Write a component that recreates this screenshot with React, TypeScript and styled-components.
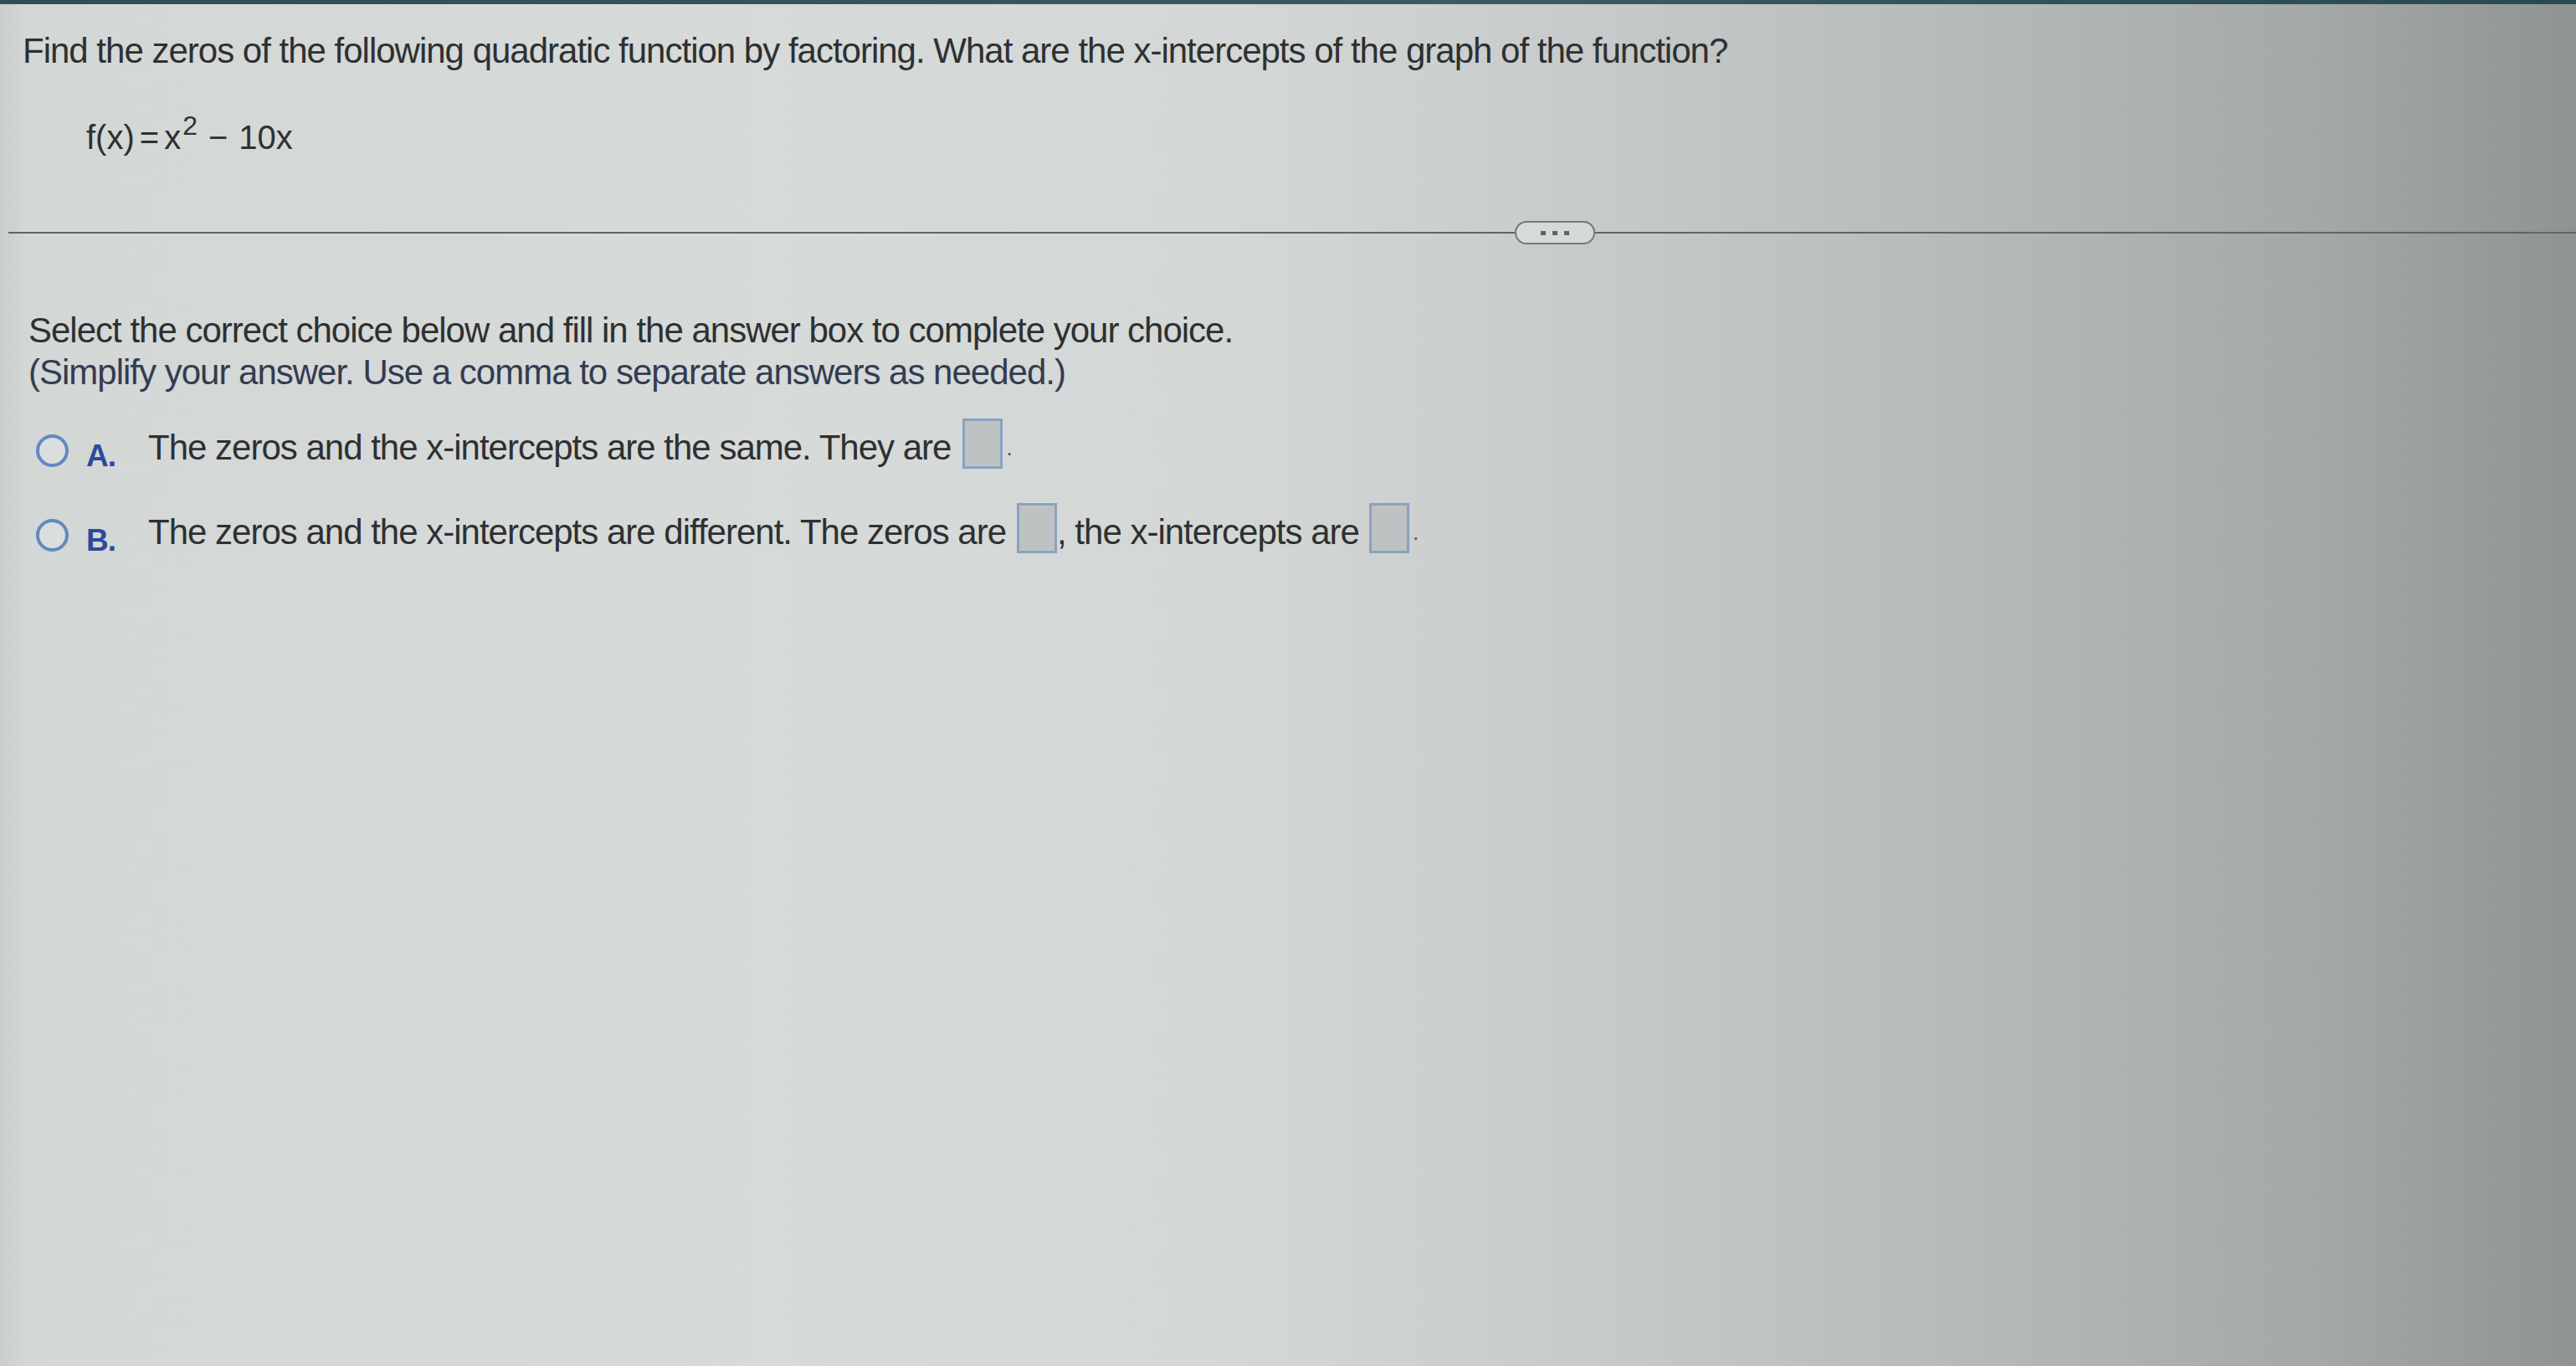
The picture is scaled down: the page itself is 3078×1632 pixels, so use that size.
import React from 'react'
import styled, { createGlobalStyle } from 'styled-components'

const GlobalStyle = createGlobalStyle`
  html, body {
    margin: 0;
    padding: 0;
  }
  body {
    min-height: 100vh;
    font-family: "Liberation Sans", Arial, sans-serif;
    color: #2e3031;
    background: linear-gradient(
      90deg,
      #c9cdcc 0%,
      #d3d7d6 1%,
      #d6dad9 30%,
      #d3d7d6 48%,
      #c6caca 62%,
      #b5baba 76%,
      #a3a8a8 90%,
      #8e9494 100%
    );
  }
`

const Page = styled.div`
  min-height: 1632px;
  display: flex;
  flex-direction: column;
`

const TopStrip = styled.div`
  height: 5px;
  background: linear-gradient(90deg, #2f4d58, #3b5a64 60%, #2c4852);
`

const QuestionArea = styled.div`
  padding: 31px 0 0 27px;
`

const Title = styled.div`
  font-size: 42px;
  line-height: 50px;
  letter-spacing: -1px;
  white-space: nowrap;
`

const Formula = styled.div`
  margin: 53px 0 0 76px;
  font-size: 40px;
  line-height: 50px;
  white-space: nowrap;
`

const Op = styled.span<{ $wide?: boolean }>`
  display: inline-block;
  margin: 0 ${(p) => (p.$wide ? '13px' : '6px')};
`

const Sup = styled.sup`
  font-size: 32px;
  line-height: 0;
  vertical-align: 17px;
  margin-left: 2px;
`

const DividerRow = styled.div`
  display: flex;
  align-items: center;
  margin-top: 75px;
  padding-left: 10px;
  height: 28px;
`

const Line = styled.div<{ $width?: number }>`
  height: 2px;
  background: #606465;
  ${(p) => (p.$width ? `width: ${p.$width}px;` : 'flex: 1;')}
`

const MorePill = styled.button`
  width: 96px;
  height: 28px;
  box-sizing: border-box;
  border: 2px solid #74797a;
  border-radius: 14px;
  background: rgba(225, 229, 228, 0.55);
  display: flex;
  align-items: center;
  justify-content: center;
  gap: 8px;
  padding: 0;
`

const Dot = styled.span`
  width: 6px;
  height: 5px;
  background: #5f6365;
`

const ChoicesArea = styled.div`
  padding: 78px 0 0 34px;
`

const Instruction = styled.div<{ $navy?: boolean }>`
  font-size: 42px;
  line-height: 50px;
  letter-spacing: -1px;
  white-space: nowrap;
  color: ${(p) => (p.$navy ? '#333c50' : '#2e3031')};
`

const Options = styled.div`
  display: flex;
  flex-direction: column;
  gap: 41px;
  margin-top: 30px;
  padding-left: 9px;
`

const OptionRow = styled.div`
  display: flex;
  align-items: center;
  height: 60px;
`

const Marker = styled.div`
  width: 134px;
  flex: none;
  display: flex;
  align-items: center;
  margin-top: 16px;
`

const Radio = styled.span`
  width: 39px;
  height: 39px;
  box-sizing: border-box;
  border-radius: 50%;
  border: 4px solid #6488c0;
  background: rgba(236, 240, 244, 0.3);
`

const Letter = styled.span`
  margin-left: 21px;
  font-size: 37px;
  font-weight: bold;
  letter-spacing: -1px;
  color: #2b4b9a;
  line-height: 40px;
  margin-top: 14px;
`

const Content = styled.div`
  display: flex;
  align-items: flex-end;
  height: 60px;
  font-size: 42px;
  line-height: 50px;
  letter-spacing: -1px;
  white-space: nowrap;
`

const Text = styled.span``

const AnswerBox = styled.span<{ $gap?: number }>`
  display: inline-block;
  width: 48px;
  height: 60px;
  box-sizing: border-box;
  margin-left: ${(p) => p.$gap ?? 13}px;
  border: 3px solid #88a2c0;
  background: #bec2c2;
`

const Punct = styled.span`
  margin-left: 4px;
  font-size: 26px;
  color: #4a4d4f;
`

const App: React.FC = () => {
  return (
    <Page>
      <GlobalStyle />
      <TopStrip />
      <QuestionArea>
        <Title>
          Find the zeros of the following quadratic function by factoring. What are the x-intercepts of the graph of the
          function?
        </Title>
        <Formula>
          f(x)<Op>=</Op>x<Sup>2</Sup>
          <Op $wide>−</Op>10x
        </Formula>
      </QuestionArea>

      <DividerRow>
        <Line $width={1800} />
        <MorePill aria-label="more">
          <Dot />
          <Dot />
          <Dot />
        </MorePill>
        <Line />
      </DividerRow>

      <ChoicesArea>
        <Instruction>Select the correct choice below and fill in the answer box to complete your choice.</Instruction>
        <Instruction $navy>(Simplify your answer. Use a comma to separate answers as needed.)</Instruction>

        <Options>
          <OptionRow>
            <Marker>
              <Radio />
              <Letter>A.</Letter>
            </Marker>
            <Content>
              <Text>The zeros and the x-intercepts are the same. They are</Text>
              <AnswerBox $gap={14} />
              <Punct>.</Punct>
            </Content>
          </OptionRow>
          <OptionRow>
            <Marker>
              <Radio />
              <Letter>B.</Letter>
            </Marker>
            <Content>
              <Text>The zeros and the x-intercepts are different. The zeros are</Text>
              <AnswerBox />
              <Text>, the x-intercepts are</Text>
              <AnswerBox $gap={12} />
              <Punct>.</Punct>
            </Content>
          </OptionRow>
        </Options>
      </ChoicesArea>
    </Page>
  )
}

export default App
